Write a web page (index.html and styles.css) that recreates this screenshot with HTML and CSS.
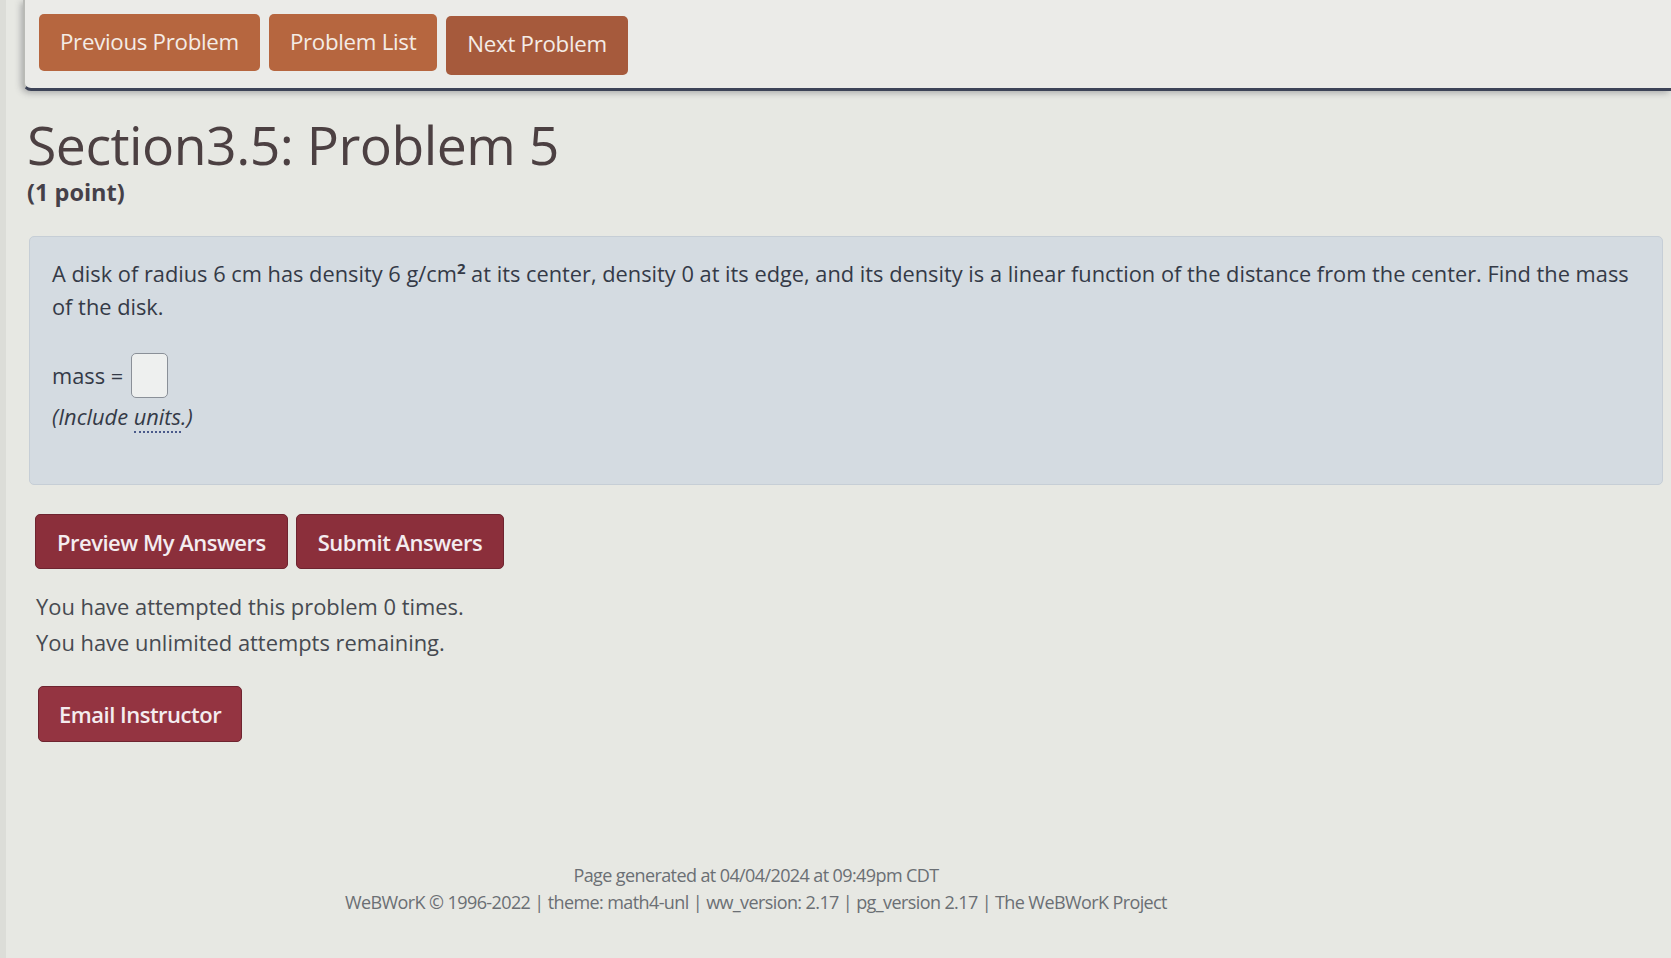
FILE: index.html
```html
<!DOCTYPE html>
<html lang="en">
<head>
  <meta charset="UTF-8" />
  <title>Section3.5: Problem 5</title>
  <link rel="stylesheet" href="styles.css">
</head>
<body>
  <div class="page">
    <div class="nav-bar">
      <a class="nav-btn" href="#">Previous Problem</a>
      <a class="nav-btn" href="#">Problem List</a>
      <a class="nav-btn dark" href="#">Next Problem</a>
    </div>

    <div class="content">
      <h1>Section3.5: Problem 5</h1>
      <div class="points">(1 point)</div>

      <div class="problem">
        <p>A disk of radius 6 cm has density 6 g/cm<sup>2</sup> at its center, density 0 at its edge, and its density is a linear function of the distance from the center. Find the mass of the disk.</p>
        <div class="answer-row">
          <span>mass =</span>
          <span class="answer-box"></span>
        </div>
        <div class="hint">(Include <span class="units">units</span>.)</div>
      </div>

      <div class="actions">
        <button class="btn">Preview My Answers</button>
        <button class="btn">Submit Answers</button>
      </div>

      <div class="attempts">
        <div>You have attempted this problem 0 times.</div>
        <div>You have unlimited attempts remaining.</div>
      </div>

      <button class="btn email">Email Instructor</button>
    </div>

    <div class="footer">
      <div>Page generated at 04/04/2024 at 09:49pm CDT</div>
      <div>WeBWorK © 1996-2022 | theme: math4-unl | ww_version: 2.17 | pg_version 2.17 | The WeBWorK Project</div>
    </div>
  </div>
</body>
</html>
```

FILE: styles.css
```css
body {
  margin: 0;
  padding: 0;
  font-family: "Open Sans", "Noto Sans", Arial, sans-serif;
  background: #e7e8e3;
  color: #3b4049;
}

.page {
  height: 958px;
  overflow: hidden;
  border-left: 6px solid #dcddd8;
  box-sizing: border-box;
}

.nav-bar {
  display: flex;
  align-items: flex-start;
  gap: 9px;
  margin-left: 17px;
  height: 74px;
  padding: 14px 0 0 14px;
  background: #ebebe8;
  border-left: 2px solid #b9bab6;
  border-bottom: 3px solid #3d4357;
  border-bottom-left-radius: 8px;
  box-shadow: -2px 2px 6px rgba(60, 60, 70, 0.35);
}

.nav-btn {
  display: block;
  padding: 0 21px;
  height: 57px;
  line-height: 55px;
  background: #b6663f;
  color: #f4ece6;
  text-decoration: none;
  font-size: 22.3px;
  border-radius: 5px;
  letter-spacing: -0.3px;
}

.nav-btn.dark {
  background: #a65a3c;
  height: 59px;
  margin-top: 2px;
}

.content {
  padding: 0 0 0 21px;
}

h1 {
  margin: 21px 0 0 0;
  font-size: 53.5px;
  font-weight: 500;
  line-height: 66px;
  color: #4c4042;
  letter-spacing: -0.5px;
}

.points {
  font-weight: bold;
  font-size: 23.5px;
  line-height: 28px;
  color: #454049;
  margin-top: 0;
}

.problem {
  margin: 30px 8px 0 2px;
  height: 249px;
  box-sizing: border-box;
  padding: 20px 22px;
  background: #d4dbe1;
  border: 1px solid #c6ced6;
  border-radius: 5px;
  font-size: 21.8px;
  color: #343a47;
}

.problem p {
  margin: 0;
  line-height: 33px;
}

.problem sup {
  font-size: 15px;
  font-weight: bold;
  line-height: 0;
}

.answer-row {
  display: flex;
  align-items: center;
  gap: 8px;
  margin-top: 30px;
}

.answer-box {
  display: inline-block;
  width: 35px;
  height: 43px;
  background: #eef0ef;
  border: 1px solid #8a9098;
  border-radius: 5px;
}

.hint {
  font-style: italic;
  margin-top: 4px;
}

.units {
  border-bottom: 2px dotted #4a5a8a;
}

.actions {
  display: flex;
  gap: 8px;
  margin: 29px 0 0 8px;
}

.btn {
  font-family: inherit;
  height: 55px;
  padding: 0 21px;
  background: #8b2f3b;
  color: #f4ecef;
  border: 1px solid #6e2430;
  border-radius: 5px;
  font-size: 22px;
  font-weight: 600;
  letter-spacing: -0.5px;
  cursor: pointer;
}

.attempts {
  margin: 20px 0 0 9px;
  font-size: 21.9px;
  line-height: 36px;
  color: #464a51;
}

.email {
  margin-top: 25px;
  margin-left: 11px;
  height: 56px;
  padding: 0 20px;
  background: #943441;
}

.footer {
  width: 1500px;
  margin-top: 120px;
  text-align: center;
  font-size: 18px;
  line-height: 27px;
  color: #6b6f74;
  letter-spacing: -0.6px;
}
```
